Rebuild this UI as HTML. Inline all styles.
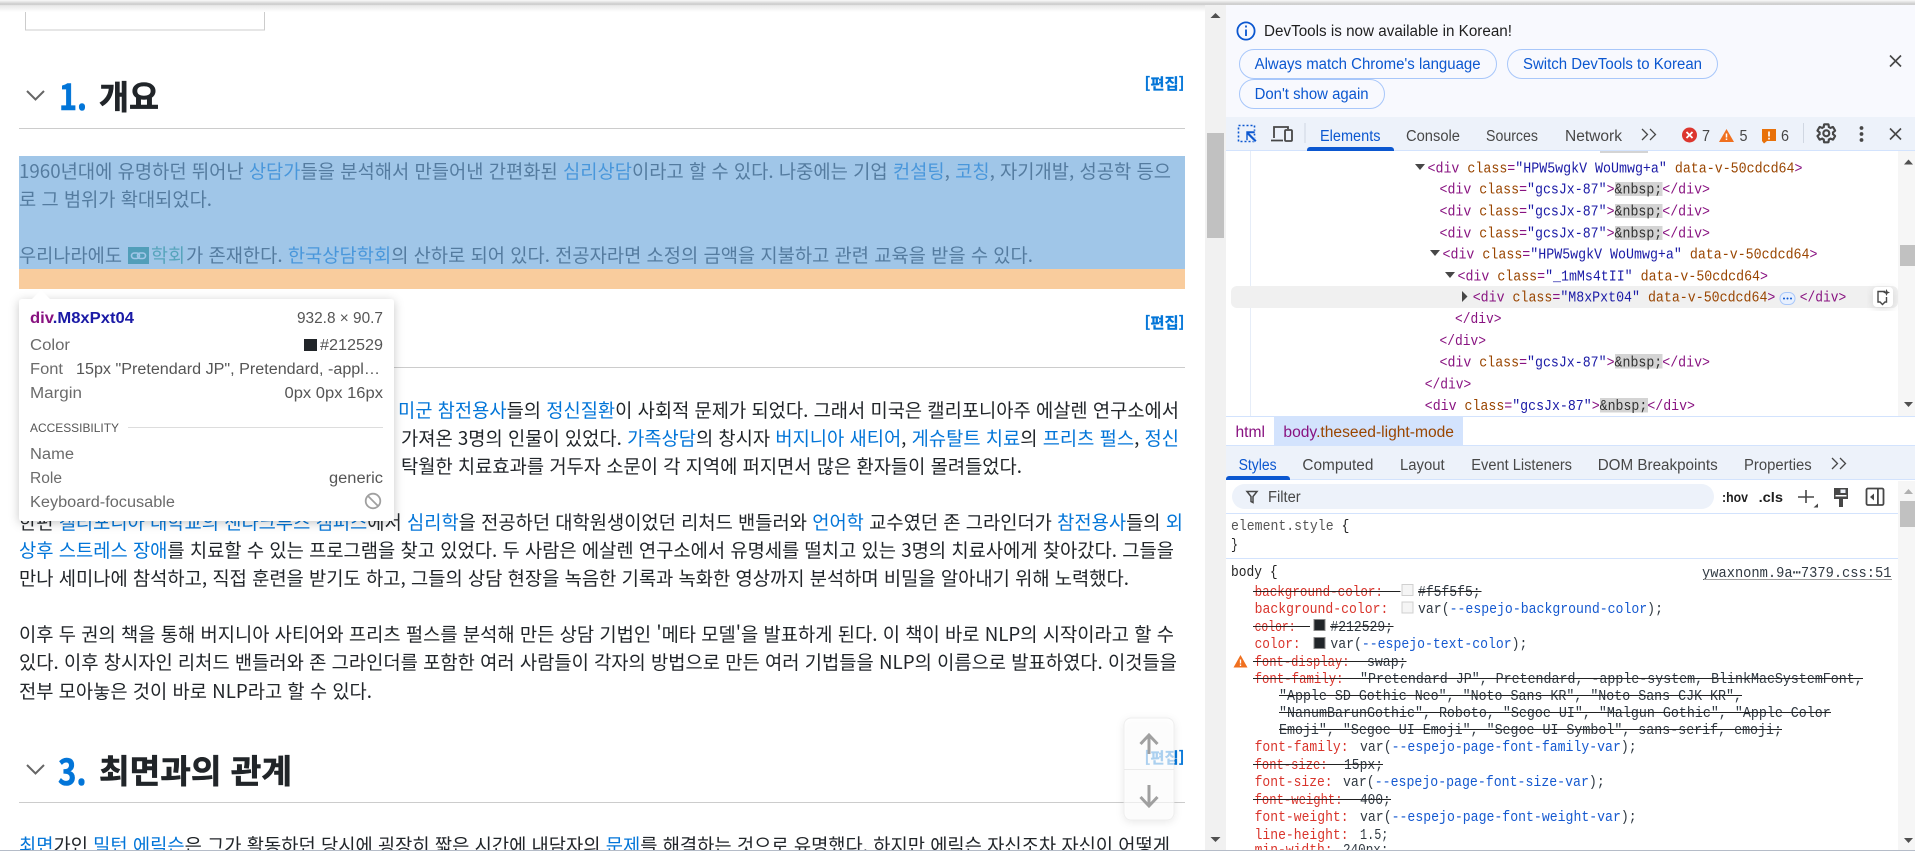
<!DOCTYPE html>
<html lang="ko"><head><meta charset="utf-8"><title>DevTools</title>
<style>
html,body{margin:0;padding:0;background:#fff;width:1915px;height:851px;overflow:hidden}
svg{display:block;position:absolute;left:0;top:0}
text{white-space:pre}
.k{font-family:"Noto Sans CJK KR","Liberation Sans",sans-serif;font-size:18.75px;fill:#212529}
.a{fill:#0275d8}.g{fill:#2a9d7e}
.h{font-family:"Noto Sans CJK KR","Liberation Sans",sans-serif;font-weight:700;font-size:33px;fill:#212529;stroke:#212529;stroke-width:.6px}
.n{fill:#0275d8}
.e{font-family:"Noto Sans CJK KR","Liberation Sans",sans-serif;font-weight:700;font-size:15px;fill:#0275d8;stroke:#0275d8;stroke-width:.25px}
.t{font-family:"Liberation Sans",sans-serif;font-size:15.5px;fill:#555}
.u{font-family:"Liberation Sans",sans-serif;font-size:15.5px;fill:#474747}
.d{font-family:"Liberation Sans",sans-serif;font-size:15.5px;fill:#1f1f1f}
.bb{font-family:"Liberation Sans",sans-serif;font-size:15.5px;fill:#0b57d0}
.m{font-family:"Liberation Mono",monospace;font-size:15px}
.tg{fill:#881280}.at{fill:#994500}.vl{fill:#1a1aa6}.nb{fill:#303030}
.p{fill:#d9342b}.v{fill:#303942}.b{fill:#1559d0}
</style></head><body>
<svg width="1915" height="851" viewBox="0 0 1915 851" xmlns="http://www.w3.org/2000/svg">
<defs>
<linearGradient id="top" x1="0" y1="0" x2="0" y2="1"><stop offset="0" stop-color="#fafafa"/><stop offset=".36" stop-color="#c9c9c9"/><stop offset=".45" stop-color="#e8e8e8"/><stop offset="1" stop-color="#fff"/></linearGradient>
<filter id="sh" x="-10%" y="-10%" width="120%" height="125%"><feDropShadow dx="0" dy="2" stdDeviation="5" flood-color="#000" flood-opacity=".22"/></filter>
<filter id="sh2" x="-30%" y="-20%" width="160%" height="140%"><feDropShadow dx="0" dy="2" stdDeviation="4" flood-color="#000" flood-opacity=".12"/></filter>
<clipPath id="pg"><rect x="0" y="0" width="1205" height="850"/></clipPath>
<clipPath id="el"><rect x="1226" y="151" width="672" height="265"/></clipPath>
<clipPath id="st"><rect x="1226" y="558" width="672" height="292"/></clipPath>
</defs>

<!-- PAGE -->
<rect x="0" y="0" width="1205" height="851" fill="#fff"/>
<rect x="25.5" y="0" width="239" height="30" fill="#fff" stroke="#ccc"/>

<g clip-path="url(#pg)">
<!-- heading 1 -->
<path d="M27 91l8.5 8.5L44 91" fill="none" stroke="#666" stroke-width="2"/>
<text class="h" x="59" y="110" textLength="28" lengthAdjust="spacingAndGlyphs" style="font-size:36px;fill:#0275d8;stroke:#0275d8">1.</text>
<text class="h" x="99" y="109" textLength="60" lengthAdjust="spacingAndGlyphs">개요</text>
<rect x="19" y="128" width="1166" height="1" fill="#ccc"/>
<text class="e" x="1144.5" y="89" textLength="40" lengthAdjust="spacingAndGlyphs">[편집]</text>

<!-- para 1 -->
<text class="k" x="19" y="178" textLength="1152" lengthAdjust="spacingAndGlyphs">1960년대에 유명하던 뛰어난 <tspan class="a">상담가</tspan>들을 분석해서 만들어낸 간편화된 <tspan class="a">심리상담</tspan>이라고 할 수 있다. 나중에는 기업 <tspan class="a">컨설팅</tspan>, <tspan class="a">코칭</tspan>, 자기개발, 성공학 등으</text>
<text class="k" x="19" y="206" textLength="193" lengthAdjust="spacingAndGlyphs">로 그 범위가 확대되었다.</text>
<text class="k" x="19" y="262" textLength="103" lengthAdjust="spacingAndGlyphs">우리나라에도</text>
<rect x="128" y="247" width="21" height="17" fill="#1a8a76"/>
<g fill="none" stroke="#fff" stroke-width="1.6"><rect x="131.5" y="253" width="8" height="5.5" rx="2.7"/><rect x="137.5" y="253" width="8" height="5.5" rx="2.7"/></g>
<text class="k g" x="151" y="262" textLength="34" lengthAdjust="spacingAndGlyphs">학회</text>
<text class="k" x="186" y="262" textLength="847" lengthAdjust="spacingAndGlyphs">가 존재한다. <tspan class="a">한국상담학회</tspan>의 산하로 되어 있다. 전공자라면 소정의 금액을 지불하고 관련 교육을 받을 수 있다.</text>
<rect x="19" y="156" width="1166" height="113" fill="#6fa8dc" fill-opacity=".66"/>
<rect x="19" y="269" width="1166" height="20" fill="#f6b26b" fill-opacity=".66"/>

<!-- heading 2 -->
<rect x="19" y="367" width="1166" height="1" fill="#ccc"/>
<text class="e" x="1144.5" y="328" textLength="40" lengthAdjust="spacingAndGlyphs">[편집]</text>

<!-- para 2 -->
<text class="k" x="398" y="417" textLength="781" lengthAdjust="spacingAndGlyphs"><tspan class="a">미군 참전용사</tspan>들의 <tspan class="a">정신질환</tspan>이 사회적 문제가 되었다. 그래서 미국은 캘리포니아주 에살렌 연구소에서</text>
<text class="k" x="401" y="445" textLength="778" lengthAdjust="spacingAndGlyphs">가져온 3명의 인물이 있었다. <tspan class="a">가족상담</tspan>의 창시자 <tspan class="a">버지니아 새티어</tspan>, <tspan class="a">게슈탈트 치료</tspan>의 <tspan class="a">프리츠 펄스</tspan>, <tspan class="a">정신</tspan></text>
<text class="k" x="401" y="473" textLength="621" lengthAdjust="spacingAndGlyphs">탁월한 치료효과를 거두자 소문이 각 지역에 퍼지면서 많은 환자들이 몰려들었다.</text>
<text class="k" x="19" y="529" textLength="1164" lengthAdjust="spacingAndGlyphs">한편 <tspan class="a">캘리포니아 대학교의 샌타크루즈 캠퍼스</tspan>에서 <tspan class="a">심리학</tspan>을 전공하던 대학원생이었던 리처드 밴들러와 <tspan class="a">언어학</tspan> 교수였던 존 그라인더가 <tspan class="a">참전용사</tspan>들의 <tspan class="a">외</tspan></text>
<text class="k" x="19" y="557" textLength="1155" lengthAdjust="spacingAndGlyphs"><tspan class="a">상후 스트레스 장애</tspan>를 치료할 수 있는 프로그램을 찾고 있었다. 두 사람은 에살렌 연구소에서 유명세를 떨치고 있는 3명의 치료사에게 찾아갔다. 그들을</text>
<text class="k" x="19" y="585" textLength="1110" lengthAdjust="spacingAndGlyphs">만나 세미나에 참석하고, 직접 훈련을 받기도 하고, 그들의 상담 현장을 녹음한 기록과 녹화한 영상까지 분석하며 비밀을 알아내기 위해 노력했다.</text>
<text class="k" x="19" y="641" textLength="1155" lengthAdjust="spacingAndGlyphs">이후 두 권의 책을 통해 버지니아 사티어와 프리츠 펄스를 분석해 만든 상담 기법인 '메타 모델'을 발표하게 된다. 이 책이 바로 NLP의 시작이라고 할 수</text>
<text class="k" x="19" y="669" textLength="1158" lengthAdjust="spacingAndGlyphs">있다. 이후 창시자인 리처드 밴들러와 존 그라인더를 포함한 여러 사람들이 각자의 방법으로 만든 여러 기법들을 NLP의 이름으로 발표하였다. 이것들을</text>
<text class="k" x="19" y="698" textLength="353" lengthAdjust="spacingAndGlyphs">전부 모아놓은 것이 바로 NLP라고 할 수 있다.</text>

<!-- heading 3 -->
<path d="M27 765l8.5 8.5L44 765" fill="none" stroke="#666" stroke-width="2"/>
<text class="h" x="58" y="785" textLength="28.5" lengthAdjust="spacingAndGlyphs" style="font-size:36px;fill:#0275d8;stroke:#0275d8">3.</text>
<text class="h" x="99" y="783" textLength="193" lengthAdjust="spacingAndGlyphs">최면과의 관계</text>
<rect x="19" y="802" width="1166" height="1" fill="#ccc"/>
<text class="e" x="1144.5" y="763" textLength="40" lengthAdjust="spacingAndGlyphs">[편집]</text>
<text class="k" x="19" y="852" textLength="1151" lengthAdjust="spacingAndGlyphs"><tspan class="a">최면</tspan>가인 <tspan class="a">밀턴 에릭슨</tspan>은 그가 활동하던 당시에 굉장히 짧은 시간에 내담자의 <tspan class="a">문제</tspan>를 해결하는 것으로 유명했다. 하지만 에릭슨 자신조차 자신이 어떻게</text>

<!-- up/down widget -->
<g filter="url(#sh2)"><rect x="1124" y="718" width="50" height="102" rx="7" fill="#fff" fill-opacity=".65" stroke="#e8e8e8" stroke-opacity=".7"/></g>
<rect x="1124" y="769" width="50" height="1" fill="#e6e6e6" fill-opacity=".8"/>
<path d="M1149 754V735M1140.5 744l8.5-9 8.5 9" fill="none" stroke="#a0a0a0" stroke-width="3"/>
<path d="M1149 785v21M1140.5 797l8.5 9 8.5-9" fill="none" stroke="#a0a0a0" stroke-width="3"/>

<!-- tooltip -->
<path d="M31 299l10-9 10 9z" fill="#fff"/>
<g filter="url(#sh)"><rect x="19" y="299" width="375" height="222" rx="3" fill="#fff"/></g>
<path d="M31 300l10-10 10 10z" fill="#fff"/>
<text class="t" x="30" y="323" textLength="104" lengthAdjust="spacingAndGlyphs" style="font-weight:700"><tspan style="fill:#881280">div</tspan><tspan style="fill:#1a1aa6">.M8xPxt04</tspan></text>
<text class="t" x="297" y="323" textLength="86" lengthAdjust="spacingAndGlyphs">932.8 × 90.7</text>
<text class="t" x="30" y="350" textLength="40" lengthAdjust="spacingAndGlyphs" style="fill:#6b6b6b">Color</text>
<rect x="304" y="339" width="13" height="12" fill="#212529"/>
<text class="t" x="320" y="350" textLength="63" lengthAdjust="spacingAndGlyphs">#212529</text>
<text class="t" x="30" y="374" textLength="33" lengthAdjust="spacingAndGlyphs" style="fill:#6b6b6b">Font</text>
<text class="t" x="76" y="374" textLength="304" lengthAdjust="spacingAndGlyphs">15px "Pretendard JP", Pretendard, -appl…</text>
<text class="t" x="30" y="398" textLength="52" lengthAdjust="spacingAndGlyphs" style="fill:#6b6b6b">Margin</text>
<text class="t" x="284.5" y="398" textLength="98.5" lengthAdjust="spacingAndGlyphs">0px 0px 16px</text>
<text class="t" x="30" y="432" textLength="89" lengthAdjust="spacingAndGlyphs" style="font-size:12px">ACCESSIBILITY</text>
<rect x="128" y="427" width="255" height="1" fill="#ddd"/>
<text class="t" x="30" y="459" textLength="44" lengthAdjust="spacingAndGlyphs" style="fill:#6b6b6b">Name</text>
<text class="t" x="30" y="483" textLength="32" lengthAdjust="spacingAndGlyphs" style="fill:#6b6b6b">Role</text>
<text class="t" x="329" y="483" textLength="54" lengthAdjust="spacingAndGlyphs">generic</text>
<text class="t" x="30" y="507" textLength="145" lengthAdjust="spacingAndGlyphs" style="fill:#6b6b6b">Keyboard-focusable</text>
<circle cx="373" cy="501" r="7.3" fill="none" stroke="#a0a0a0" stroke-width="1.8"/>
<path d="M368 496l10 10" stroke="#a0a0a0" stroke-width="1.8"/>
</g>

<!-- top shadow -->
<rect x="0" y="0" width="1915" height="12" fill="url(#top)"/>

<!-- main scrollbar -->
<rect x="1205" y="5" width="21" height="846" fill="#f1f1f1"/>
<rect x="1207" y="133" width="17" height="105" fill="#c1c1c1"/>
<path d="M1215.5 13l5 5h-10z" fill="#505050"/>
<path d="M1215.5 842l5-5h-10z" fill="#505050"/>

<!-- DEVTOOLS -->
<rect x="1226" y="5" width="689" height="846" fill="#fff"/>
<rect x="1226" y="5" width="689" height="112" fill="#f8f9fe"/>
<circle cx="1246" cy="31" r="8.6" fill="none" stroke="#0b57d0" stroke-width="1.8"/>
<path d="M1246 29.5v6.5M1246 25.5v2" stroke="#0b57d0" stroke-width="1.8"/>
<text class="d" x="1264" y="36" textLength="248" lengthAdjust="spacingAndGlyphs">DevTools is now available in Korean!</text>
<g fill="none" stroke="#a8c7fa"><rect x="1239.5" y="49.5" width="257" height="29" rx="14.5"/><rect x="1507.5" y="49.5" width="210" height="29" rx="14.5"/><rect x="1239.5" y="79.5" width="145" height="29" rx="14.5"/></g>
<text class="bb" x="1254.6" y="69" textLength="226" lengthAdjust="spacingAndGlyphs">Always match Chrome's language</text>
<text class="bb" x="1523" y="69" textLength="179" lengthAdjust="spacingAndGlyphs">Switch DevTools to Korean</text>
<text class="bb" x="1254.6" y="99" textLength="114" lengthAdjust="spacingAndGlyphs">Don't show again</text>
<path d="M1890 55.5l11 11M1901 55.5l-11 11" stroke="#474747" stroke-width="1.6"/>

<!-- toolbar -->
<rect x="1226" y="117" width="689" height="34" fill="#edf2fa"/>
<rect x="1226" y="150" width="689" height="1" fill="#d3e3fd"/>
<rect x="1238.5" y="125.5" width="16" height="16" fill="none" stroke="#0b57d0" stroke-width="1.6" stroke-dasharray="2 2"/>
<path d="M1246 131h9v2.5h-5l7 7-2 2-7-7v5H1246z" fill="#0b57d0" stroke="#edf2fa" stroke-width=".6"/>
<path d="M1274 138v-11h14v2M1271 140.5h12" fill="none" stroke="#474747" stroke-width="1.8"/>
<rect x="1285" y="130" width="7" height="11" rx="1" fill="none" stroke="#474747" stroke-width="1.8"/>
<rect x="1304.5" y="123" width="1" height="20" fill="#d0d7e2"/>
<text class="t" x="1320" y="141" textLength="60.5" lengthAdjust="spacingAndGlyphs" style="fill:#0b57d0">Elements</text>
<path d="M1307 151v-1a3 3 0 0 1 3-3h81a3 3 0 0 1 3 3v1z" fill="#0b57d0"/>
<text class="u" x="1406" y="141" textLength="54" lengthAdjust="spacingAndGlyphs">Console</text>
<text class="u" x="1486" y="141" textLength="52" lengthAdjust="spacingAndGlyphs">Sources</text>
<text class="u" x="1565" y="141" textLength="57" lengthAdjust="spacingAndGlyphs">Network</text>
<path d="M1642 129l5.5 5.5-5.5 5.5M1650 129l5.5 5.5-5.5 5.5" fill="none" stroke="#474747" stroke-width="1.3"/>
<circle cx="1689.5" cy="135" r="7.5" fill="#dc362e"/><path d="M1686.5 132l6 6M1692.5 132l-6 6" stroke="#fff" stroke-width="1.8"/>
<text class="u" x="1702" y="141" textLength="8" lengthAdjust="spacingAndGlyphs">7</text>
<path d="M1726.5 129l7.5 13h-15z" fill="#f0701f"/><path d="M1726.5 133.5v4M1726.5 138.5v1.5" stroke="#fff" stroke-width="1.5"/>
<text class="u" x="1739.5" y="141" textLength="8" lengthAdjust="spacingAndGlyphs">5</text>
<path d="M1762 129h14v12h-9l-3 2.500-2-2.500z" fill="#e8710a"/><path d="M1769 131.5v5M1769 137.8v1.700" stroke="#fff" stroke-width="1.7"/>
<text class="u" x="1781" y="141" textLength="8" lengthAdjust="spacingAndGlyphs">6</text>
<rect x="1803" y="123" width="1" height="20" fill="#d0d7e2"/>
<g transform="translate(1815.5,122.5) scale(.9)"><path d="M19.43 12.98c.04-.32.07-.64.07-.98s-.03-.66-.07-.98l2.11-1.65c.19-.15.24-.42.12-.64l-2-3.46c-.12-.22-.39-.3-.61-.22l-2.49 1c-.52-.4-1.08-.73-1.69-.98l-.38-2.65C14.46 2.18 14.25 2 14 2h-4c-.25 0-.46.18-.49.42l-.38 2.65c-.61.25-1.17.59-1.69.98l-2.49-1c-.23-.09-.49 0-.61.22l-2 3.46c-.13.22-.07.49.12.64l2.11 1.65c-.04.32-.07.65-.07.98s.03.66.07.98l-2.11 1.65c-.19.15-.24.42-.12.64l2 3.46c.12.22.39.3.61.22l2.49-1c.52.4 1.08.73 1.69.98l.38 2.65c.03.24.24.42.49.42h4c.25 0 .46-.18.49-.42l.38-2.65c.61-.25 1.17-.59 1.69-.98l2.49 1c.23.09.49 0 .61-.22l2-3.46c.12-.22.07-.49-.12-.64l-2.11-1.65z" fill="none" stroke="#474747" stroke-width="2.4"/><circle cx="12" cy="12" r="3.3" fill="none" stroke="#474747" stroke-width="2.4"/></g>
<g fill="#474747"><circle cx="1861.5" cy="128" r="1.9"/><circle cx="1861.5" cy="134" r="1.9"/><circle cx="1861.5" cy="140" r="1.9"/></g>
<path d="M1890 128.5l11 11M1901 128.5l-11 11" stroke="#474747" stroke-width="1.6"/>

<!-- elements tree -->
<rect x="1250" y="151" width="1" height="265" fill="#e6edf8"/>
<rect x="1898" y="151" width="17" height="265" fill="#f6f6f6"/>
<rect x="1900" y="245" width="15" height="21" fill="#c1c1c1"/>
<path d="M1908.5 159.5l4.500 5h-9z" fill="#505050"/><path d="M1908.5 407l4.500-5h-9z" fill="#505050"/>
<rect x="1600" y="151" width="48" height="2" fill="#d4d4d4"/>
<rect x="1231" y="286" width="667" height="22" rx="6" fill="#f0f0f0"/>
<g clip-path="url(#el)">
<path d="M1415 164h10l-5 6z" fill="#474747"/>
<text class="m" x="1427.5" y="172.5" textLength="375" lengthAdjust="spacingAndGlyphs"><tspan class="tg">&lt;div</tspan> <tspan class="at">class</tspan><tspan class="tg">=</tspan><tspan class="vl">"HPW5wgkV WoUmwg+a"</tspan> <tspan class="at">data-v-50cdcd64</tspan><tspan class="tg">&gt;</tspan></text>

<rect x="1615" y="182" width="47.5" height="14" fill="#d4d4d4"/>
<text class="m" x="1439.5" y="193.5" textLength="270.5" lengthAdjust="spacingAndGlyphs"><tspan class="tg">&lt;div</tspan> <tspan class="at">class</tspan><tspan class="tg">=</tspan><tspan class="vl">"gcsJx-87"</tspan><tspan class="tg">&gt;</tspan><tspan class="nb">&amp;nbsp;</tspan><tspan class="tg">&lt;/div&gt;</tspan></text>
<rect x="1615" y="204" width="47.5" height="14" fill="#d4d4d4"/>
<text class="m" x="1439.5" y="215.5" textLength="270.5" lengthAdjust="spacingAndGlyphs"><tspan class="tg">&lt;div</tspan> <tspan class="at">class</tspan><tspan class="tg">=</tspan><tspan class="vl">"gcsJx-87"</tspan><tspan class="tg">&gt;</tspan><tspan class="nb">&amp;nbsp;</tspan><tspan class="tg">&lt;/div&gt;</tspan></text>
<rect x="1615" y="226" width="47.5" height="14" fill="#d4d4d4"/>
<text class="m" x="1439.5" y="237.5" textLength="270.5" lengthAdjust="spacingAndGlyphs"><tspan class="tg">&lt;div</tspan> <tspan class="at">class</tspan><tspan class="tg">=</tspan><tspan class="vl">"gcsJx-87"</tspan><tspan class="tg">&gt;</tspan><tspan class="nb">&amp;nbsp;</tspan><tspan class="tg">&lt;/div&gt;</tspan></text>

<path d="M1430 250h10l-5 6z" fill="#474747"/>
<text class="m" x="1442.5" y="258.5" textLength="375" lengthAdjust="spacingAndGlyphs"><tspan class="tg">&lt;div</tspan> <tspan class="at">class</tspan><tspan class="tg">=</tspan><tspan class="vl">"HPW5wgkV WoUmwg+a"</tspan> <tspan class="at">data-v-50cdcd64</tspan><tspan class="tg">&gt;</tspan></text>
<path d="M1445 272h10l-5 6z" fill="#474747"/>
<text class="m" x="1457.5" y="280.5" textLength="310.5" lengthAdjust="spacingAndGlyphs"><tspan class="tg">&lt;div</tspan> <tspan class="at">class</tspan><tspan class="tg">=</tspan><tspan class="vl">"_1mMs4tII"</tspan> <tspan class="at">data-v-50cdcd64</tspan><tspan class="tg">&gt;</tspan></text>

<path d="M1462 291l5.5 5.5-5.5 5.5z" fill="#474747"/>
<text class="m" x="1472.7" y="301.5" textLength="302.7" lengthAdjust="spacingAndGlyphs"><tspan class="tg">&lt;div</tspan> <tspan class="at">class</tspan><tspan class="tg">=</tspan><tspan class="vl">"M8xPxt04"</tspan> <tspan class="at">data-v-50cdcd64</tspan><tspan class="tg">&gt;</tspan></text>
<rect x="1780" y="292.5" width="15" height="12" rx="6" fill="#e8f0fe" stroke="#a8c7fa"/>
<g fill="#0b57d0"><circle cx="1784" cy="298.5" r="1"/><circle cx="1787.5" cy="298.5" r="1"/><circle cx="1791" cy="298.5" r="1"/></g>
<text class="m tg" x="1799.8" y="301.5" textLength="46.5" lengthAdjust="spacingAndGlyphs">&lt;/div&gt;</text>

<text class="m tg" x="1455" y="323" textLength="46.5" lengthAdjust="spacingAndGlyphs">&lt;/div&gt;</text>
<text class="m tg" x="1439.5" y="345" textLength="46.5" lengthAdjust="spacingAndGlyphs">&lt;/div&gt;</text>
<rect x="1615" y="354" width="47.5" height="14.5" fill="#d4d4d4"/>
<text class="m" x="1439.5" y="366.5" textLength="270.5" lengthAdjust="spacingAndGlyphs"><tspan class="tg">&lt;div</tspan> <tspan class="at">class</tspan><tspan class="tg">=</tspan><tspan class="vl">"gcsJx-87"</tspan><tspan class="tg">&gt;</tspan><tspan class="nb">&amp;nbsp;</tspan><tspan class="tg">&lt;/div&gt;</tspan></text>
<text class="m tg" x="1424.8" y="388.5" textLength="46.5" lengthAdjust="spacingAndGlyphs">&lt;/div&gt;</text>
<rect x="1600" y="398" width="48" height="14.5" fill="#d4d4d4"/>
<text class="m" x="1424.8" y="410" textLength="270.2" lengthAdjust="spacingAndGlyphs"><tspan class="tg">&lt;div</tspan> <tspan class="at">class</tspan><tspan class="tg">=</tspan><tspan class="vl">"gcsJx-87"</tspan><tspan class="tg">&gt;</tspan><tspan class="nb">&amp;nbsp;</tspan><tspan class="tg">&lt;/div&gt;</tspan></text>
</g>
<!-- ai button -->
<g filter="url(#sh2)"><rect x="1873" y="287" width="20" height="20" rx="4" fill="#fff"/></g>
<path d="M1885 291.5h-7v10.5l2 0 2.5 2.5 2.5-2.5h1.500v-5" fill="none" stroke="#474747" stroke-width="1.4"/>
<path d="M1886.5 289l1 2.500 2.500 1-2.500 1-1 2.500-1-2.500-2.500-1 2.500-1z" fill="#474747"/>

<!-- breadcrumbs -->
<rect x="1226" y="416" width="689" height="1" fill="#d3e3fd"/>
<rect x="1274" y="417" width="189" height="28" fill="#d3e3fd"/>
<text class="t" x="1235.5" y="437" textLength="29.5" lengthAdjust="spacingAndGlyphs" style="fill:#881280">html</text>
<text class="t" x="1283.4" y="437" textLength="170.6" lengthAdjust="spacingAndGlyphs"><tspan style="fill:#881280">body</tspan><tspan style="fill:#994500">.theseed-light-mode</tspan></text>

<!-- styles tabs -->
<rect x="1226" y="445" width="689" height="35" fill="#edf2fa"/>
<rect x="1226" y="445" width="689" height="1" fill="#d3e3fd"/>
<rect x="1226" y="479" width="689" height="1" fill="#d3e3fd"/>
<text class="t" x="1238.6" y="470" textLength="38" lengthAdjust="spacingAndGlyphs" style="fill:#0b57d0">Styles</text>
<path d="M1226 480v-1a3 3 0 0 1 3-3h58a3 3 0 0 1 3 3v1z" fill="#0b57d0"/>
<text class="u" x="1302.4" y="470" textLength="71" lengthAdjust="spacingAndGlyphs">Computed</text>
<text class="u" x="1400" y="470" textLength="44.7" lengthAdjust="spacingAndGlyphs">Layout</text>
<text class="u" x="1471.3" y="470" textLength="100.7" lengthAdjust="spacingAndGlyphs">Event Listeners</text>
<text class="u" x="1597.7" y="470" textLength="120" lengthAdjust="spacingAndGlyphs">DOM Breakpoints</text>
<text class="u" x="1744" y="470" textLength="67.7" lengthAdjust="spacingAndGlyphs">Properties</text>
<path d="M1832 458l5.5 5.5-5.5 5.5M1840 458l5.5 5.5-5.5 5.5" fill="none" stroke="#474747" stroke-width="1.3"/>

<!-- filter row -->
<rect x="1232" y="484" width="482" height="25" rx="12.5" fill="#edf2fa"/>
<path d="M1247 491.5h10l-4 5v6l-2-1v-5z" fill="none" stroke="#474747" stroke-width="1.5"/>
<text class="u" x="1268" y="502" textLength="32.7" lengthAdjust="spacingAndGlyphs">Filter</text>
<text class="d" x="1722" y="502" textLength="26" lengthAdjust="spacingAndGlyphs" style="font-size:14px;font-weight:700">:hov</text>
<text class="d" x="1758.6" y="502" textLength="24.4" lengthAdjust="spacingAndGlyphs" style="font-size:14px;font-weight:700">.cls</text>
<path d="M1806 490v13M1798 497h16" stroke="#474747" stroke-width="1.6"/>
<path d="M1818 503.5v4h-4.5z" fill="#474747"/>
<path d="M1834 488h14v11h-5v8h-4v-8h-5z" fill="#474747"/><rect x="1840.5" y="489.5" width="5" height="3.5" fill="#edf2fa"/><rect x="1835.5" y="495" width="11" height="1.5" fill="#fff"/>
<rect x="1866.5" y="488.5" width="17" height="16.5" rx="1.5" fill="none" stroke="#474747" stroke-width="1.8"/>
<rect x="1877" y="489" width="1.8" height="16" fill="#474747"/>
<path d="M1874 493.5v7l-4-3.500z" fill="#474747"/>
<rect x="1226" y="513" width="689" height="1" fill="#d3e3fd"/>
<rect x="1226" y="558" width="689" height="1" fill="#d3e3fd"/>

<!-- styles content -->
<rect x="1898" y="481" width="17" height="370" fill="#f6f6f6"/>
<rect x="1900" y="501" width="15" height="26" fill="#c1c1c1"/>
<path d="M1908.5 489l4.500 5h-9z" fill="#b0b0b0"/>
<path d="M1908.5 843l4.500-5h-9z" fill="#505050"/>

<text class="m" x="1231" y="530" textLength="118.4" lengthAdjust="spacingAndGlyphs" style="fill:#555">element.style <tspan style="fill:#222">{</tspan></text>
<text class="m" x="1231" y="549" textLength="7" lengthAdjust="spacingAndGlyphs" style="fill:#222">}</text>

<g clip-path="url(#st)">
<text class="m" x="1231" y="576" textLength="46.6" lengthAdjust="spacingAndGlyphs" style="fill:#222">body {</text>
<text class="m" x="1702" y="577" textLength="189.5" lengthAdjust="spacingAndGlyphs" style="fill:#303942">ywaxnonm.9a⋯7379.css:51</text>
<rect x="1704" y="579" width="188" height="1" fill="#a0a0a0"/>

<!-- 1 -->
<text class="m p" x="1254.6" y="596" textLength="128.4" lengthAdjust="spacingAndGlyphs">background-color:</text>
<rect x="1402" y="584.5" width="11" height="11" fill="#f5f5f5" stroke="#d0d0d0"/>
<text class="m v" x="1418" y="596" textLength="62.6" lengthAdjust="spacingAndGlyphs">#f5f5f5;</text>
<path d="M1253 591.5h147.5M1418 591.5h63.5" stroke="#222" stroke-width="1"/>
<!-- 2 -->
<text class="m p" x="1254.6" y="613" textLength="133.8" lengthAdjust="spacingAndGlyphs">background-color:</text>
<rect x="1402" y="602" width="11" height="11" fill="#f5f5f5" stroke="#d0d0d0"/>
<text class="m v" x="1418" y="613" textLength="245" lengthAdjust="spacingAndGlyphs">var(<tspan class="b">--espejo-background-color</tspan>);</text>
<!-- 3 -->
<text class="m p" x="1254.6" y="631" textLength="41" lengthAdjust="spacingAndGlyphs">color:</text>
<rect x="1314" y="619.5" width="11" height="11" fill="#212529" stroke="#888"/>
<text class="m v" x="1330.4" y="631" textLength="62.6" lengthAdjust="spacingAndGlyphs">#212529;</text>
<path d="M1253 626.5h57M1330 626.5h63.5" stroke="#222" stroke-width="1"/>
<!-- 4 -->
<text class="m p" x="1254.6" y="648" textLength="46" lengthAdjust="spacingAndGlyphs">color:</text>
<rect x="1314" y="637.5" width="11" height="11" fill="#212529" stroke="#888"/>
<text class="m v" x="1330.4" y="648" textLength="197" lengthAdjust="spacingAndGlyphs">var(<tspan class="b">--espejo-text-color</tspan>);</text>
<!-- 5 -->
<path d="M1240.5 655l7 12.5h-14z" fill="#f0701f"/><path d="M1240.5 659.5v4M1240.5 664.5v1.5" stroke="#fff" stroke-width="1.3"/>
<text class="m p" x="1254.6" y="666" textLength="95" lengthAdjust="spacingAndGlyphs">font-display:</text>
<text class="m v" x="1367" y="666" textLength="39.5" lengthAdjust="spacingAndGlyphs">swap;</text>
<path d="M1253 661.5h153.5" stroke="#222"/>
<!-- 6-9 -->
<text class="m p" x="1254.6" y="683" textLength="89" lengthAdjust="spacingAndGlyphs">font-family:</text>
<text class="m v" x="1360" y="683" textLength="502.7" lengthAdjust="spacingAndGlyphs">"Pretendard JP", Pretendard, -apple-system, BlinkMacSystemFont,</text>
<path d="M1253 678.5h610" stroke="#222"/>
<text class="m v" x="1279" y="700" textLength="463" lengthAdjust="spacingAndGlyphs">"Apple SD Gothic Neo", "Noto Sans KR", "Noto Sans CJK KR",</text>
<path d="M1279 695.5h463" stroke="#222"/>
<text class="m v" x="1279" y="717" textLength="551.8" lengthAdjust="spacingAndGlyphs">"NanumBarunGothic", Roboto, "Segoe UI", "Malgun Gothic", "Apple Color</text>
<path d="M1279 712.5h552" stroke="#222"/>
<text class="m v" x="1279" y="734" textLength="503" lengthAdjust="spacingAndGlyphs">Emoji", "Segoe UI Emoji", "Segoe UI Symbol", sans-serif, emoji;</text>
<path d="M1279 729.5h503" stroke="#222"/>
<!-- 10 -->
<text class="m p" x="1254.6" y="751" textLength="94" lengthAdjust="spacingAndGlyphs">font-family:</text>
<text class="m v" x="1360" y="751" textLength="276.7" lengthAdjust="spacingAndGlyphs">var(<tspan class="b">--espejo-page-font-family-var</tspan>);</text>
<!-- 11 -->
<text class="m p" x="1254.6" y="769" textLength="73" lengthAdjust="spacingAndGlyphs">font-size:</text>
<text class="m v" x="1344" y="769" textLength="39" lengthAdjust="spacingAndGlyphs">15px;</text>
<path d="M1253 764.5h130" stroke="#222"/>
<!-- 12 -->
<text class="m p" x="1254.6" y="786" textLength="78" lengthAdjust="spacingAndGlyphs">font-size:</text>
<text class="m v" x="1343" y="786" textLength="261.8" lengthAdjust="spacingAndGlyphs">var(<tspan class="b">--espejo-page-font-size-var</tspan>);</text>
<!-- 13 -->
<text class="m p" x="1254.6" y="804" textLength="88" lengthAdjust="spacingAndGlyphs">font-weight:</text>
<text class="m v" x="1360" y="804" textLength="30.7" lengthAdjust="spacingAndGlyphs">400;</text>
<path d="M1253 799.5h138" stroke="#222"/>
<!-- 14 -->
<text class="m p" x="1254.6" y="821" textLength="94" lengthAdjust="spacingAndGlyphs">font-weight:</text>
<text class="m v" x="1360" y="821" textLength="276.7" lengthAdjust="spacingAndGlyphs">var(<tspan class="b">--espejo-page-font-weight-var</tspan>);</text>
<!-- 15 -->
<text class="m p" x="1254.6" y="839" textLength="94" lengthAdjust="spacingAndGlyphs">line-height:</text>
<text class="m v" x="1360" y="839" textLength="28.4" lengthAdjust="spacingAndGlyphs">1.5;</text>
<!-- 16 -->
<text class="m p" x="1254.6" y="854" textLength="78" lengthAdjust="spacingAndGlyphs">min-width:</text>
<text class="m v" x="1343" y="854" textLength="45.4" lengthAdjust="spacingAndGlyphs">240px;</text>
</g>

<!-- bottom line -->
<rect x="0" y="850" width="1915" height="1" fill="#b5bcc8"/>
</svg>
</body></html>
